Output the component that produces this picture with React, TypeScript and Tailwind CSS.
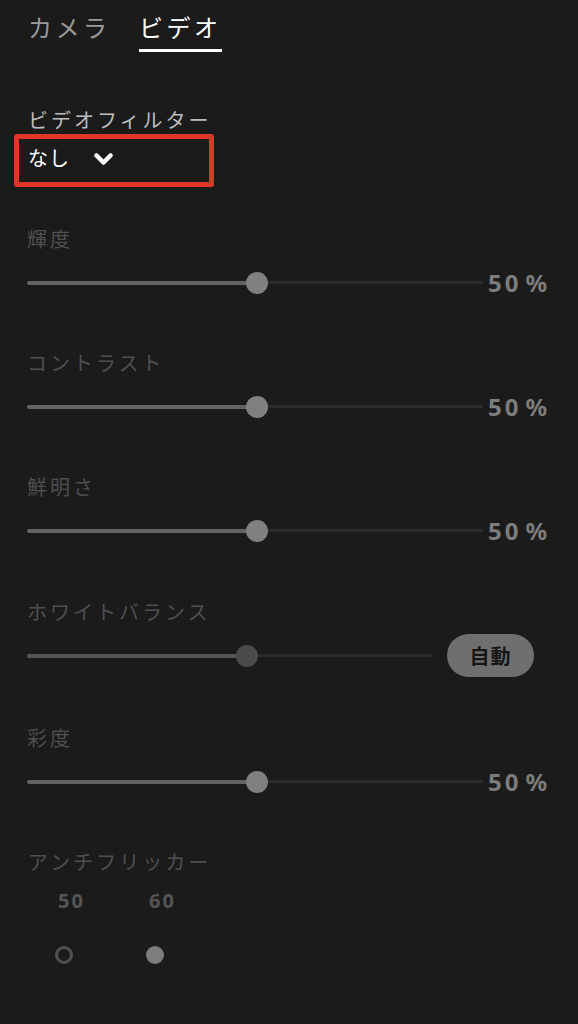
import React from "react";

const jp = { fontFamily: '"Noto Sans CJK JP", "Noto Sans", sans-serif' };
const num = { fontFamily: '"Noto Sans", "Noto Sans CJK JP", sans-serif' };

interface SliderProps {
  label: string;
  height: number;
  trackWidth: number;
  thumbAt: number;
  dim?: boolean;
  right: React.ReactNode;
}

function SliderSection({ label, height, trackWidth, thumbAt, dim, right }: SliderProps) {
  return (
    <div style={{ height }} className="pl-[27px]">
      <div className="text-[20px] leading-[28px] tracking-[3px] text-[#4f4f4f]">{label}</div>
      <div className="mt-[17.5px] h-[24px] flex items-center">
        <div className="relative h-[24px] shrink-0" style={{ width: trackWidth }}>
          {/* filled part */}
          <div
            className={`absolute left-0 top-[10px] h-[4px] rounded-l-full ${dim ? "bg-[#555555]" : "bg-[#636363]"}`}
            style={{ width: thumbAt }}
          />
          {/* rest of track */}
          <div
            className="absolute right-0 top-[10.5px] h-[3px] bg-[#2a2a2a]"
            style={{ left: thumbAt }}
          />
          {/* thumb */}
          <div
            className={`absolute top-px w-[22px] h-[22px] rounded-full ${dim ? "bg-[#4b4b4b]" : "bg-[#808080]"}`}
            style={{ left: thumbAt - 11 }}
          />
        </div>
        {right}
      </div>
    </div>
  );
}

function Percent() {
  return (
    <span style={num} className="ml-[5px] text-[24px] leading-[24px] font-bold text-[#7c7c7c] flex">
      <span className="tracking-[3px]">50</span>
      <span className="ml-[4px]">%</span>
    </span>
  );
}

export default function App() {
  return (
    <div style={jp} className="w-[578px] h-[1024px] bg-[#1b1b1b] overflow-hidden">
      {/* TABS */}
      <div className="flex gap-[28.5px] pl-[28px] pt-[10px]">
        <div className="flex flex-col">
          <span className="text-[24px] leading-[34px] tracking-[3.5px] text-[#9a9a9a]">カメラ</span>
          <div className="mt-[5px] h-[3px]" />
        </div>
        <div className="flex flex-col">
          <span className="text-[24px] leading-[34px] tracking-[3.5px] text-white">ビデオ</span>
          <div className="mt-[5px] h-[3px] bg-white" />
        </div>
      </div>

      {/* VIDEO FILTER */}
      <div className="pl-[28px] mt-[54px] text-[20px] leading-[28px] tracking-[3px] text-[#bdbdbd]">
        ビデオフィルター
      </div>
      <div className="ml-[14px] w-[200px] h-[53px] border-[5px] border-[#e3342a] rounded-[3px] pl-[9px] pt-[5px] flex items-start">
        <span className="text-[20px] leading-[28px] tracking-[1px] text-white">なし</span>
        <svg width="19" height="13" viewBox="0 0 19 13" className="ml-[24px] mt-[9px]">
          <path d="M2.5 2.5 L9.5 9.5 L16.5 2.5" fill="none" stroke="#ffffff" strokeWidth="4.5" strokeLinejoin="round" strokeLinecap="round" />
        </svg>
      </div>

      {/* SLIDERS */}
      <div className="mt-[38.4px]">
        <SliderSection label="輝度" height={124} trackWidth={456} thumbAt={230} right={<Percent />} />
        <SliderSection label="コントラスト" height={124} trackWidth={456} thumbAt={230} right={<Percent />} />
        <SliderSection label="鮮明さ" height={125} trackWidth={456} thumbAt={230} right={<Percent />} />
        <SliderSection
          label="ホワイトバランス"
          height={126}
          trackWidth={405}
          thumbAt={220}
          dim
          right={
            <div className="ml-[15px] w-[87px] h-[43px] shrink-0 rounded-full bg-[#6f6f6f] flex items-center justify-center">
              <span className="text-[20px] leading-[28px] font-bold tracking-[1px] text-[#151515]">自動</span>
            </div>
          }
        />
        <SliderSection label="彩度" height={124} trackWidth={456} thumbAt={230} right={<Percent />} />
      </div>

      {/* ANTI FLICKER */}
      <div className="pl-[28px] text-[20px] leading-[28px] tracking-[3px] text-[#4f4f4f]">アンチフリッカー</div>
      <div className="flex pl-[55px] mt-[13px]">
        <div className="w-[91px] flex flex-col items-start">
          <span style={num} className="pl-[3px] text-[20px] leading-[24px] font-bold tracking-[2px] text-[#555555]">50</span>
          <div className="mt-[32.5px] w-[18px] h-[18px] rounded-full border-[3px] border-[#505050]" />
        </div>
        <div className="w-[91px] flex flex-col items-start">
          <span style={num} className="pl-[3px] text-[20px] leading-[24px] font-bold tracking-[2px] text-[#555555]">60</span>
          <div className="mt-[32.5px] w-[18px] h-[18px] rounded-full bg-[#7d7d7d]" />
        </div>
      </div>
    </div>
  );
}
